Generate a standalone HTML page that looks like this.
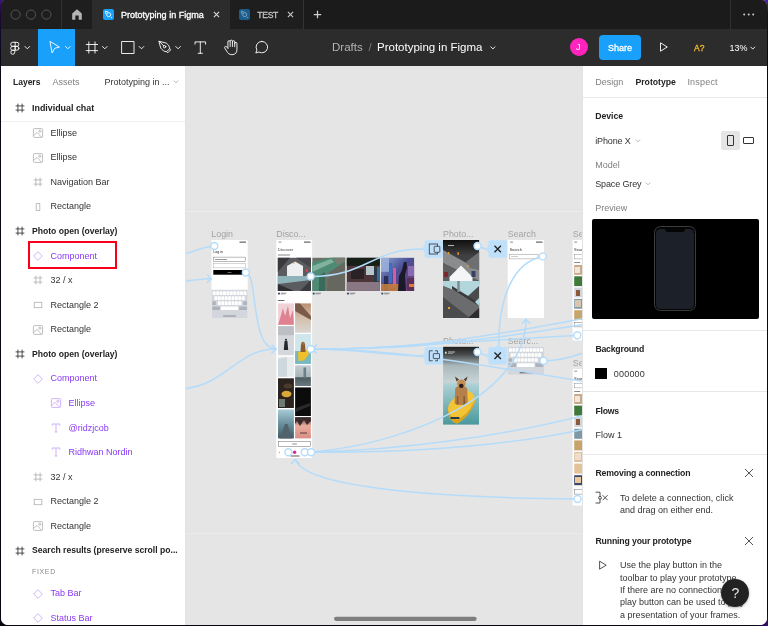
<!DOCTYPE html>
<html><head><meta charset="utf-8">
<style>
*{box-sizing:border-box;margin:0;padding:0}
html,body{width:768px;height:626px;overflow:hidden;background:radial-gradient(circle at 100% 100%,#3a0f78 0,rgba(58,15,120,0) 14px),radial-gradient(circle at 100% 0,#4a1ad0 0,rgba(74,26,208,0) 12px),linear-gradient(180deg,#3a1478 0px,#1a0a38 14px,#0b0616 60px,#08050f 100%);font-family:"Liberation Sans",sans-serif;font-size:9px;color:#222}
#win{position:absolute;left:1px;top:0;width:766px;height:625px;background:#e5e5e5;border-radius:5px 5px 7px 7px;overflow:hidden;will-change:transform}
.abs{position:absolute}
#tabbar{position:absolute;left:0;top:0;width:766px;height:29px;background:#1b1b1b}
#toolbar{position:absolute;left:0;top:29px;width:766px;height:37px;background:#2c2c2c}
#left{position:absolute;left:0;top:66px;width:185px;height:560px;background:#fff;border-right:1px solid #e2e2e2}
#right{position:absolute;left:581px;top:66px;width:185px;height:560px;background:#fff;border-left:1px solid #e2e2e2}
#canvas{position:absolute;left:185px;top:66px;width:396px;height:560px;background:#e5e5e5;overflow:hidden}
.t{position:absolute;white-space:nowrap;line-height:12px}
</style></head><body>
<div id="win">
<div id="tabbar">
<div class="abs" style="left:0;top:0;width:60px;height:29px;background:#1e1e1e"></div><div class="abs" style="left:60px;top:0;width:1px;height:29px;background:#303030"></div>
<div class="abs" style="left:61px;top:0;width:30px;height:29px;background:#1e1e1e"></div>
<svg class="abs" style="left:0;top:0" width="100" height="29" viewBox="0 0 100 29">
<g fill="none" stroke="#5a5a5a" stroke-width="0.9"><circle cx="14.6" cy="14.6" r="4.6"/><circle cx="30" cy="14.6" r="4.6"/><circle cx="45.4" cy="14.6" r="4.6"/></g>
<path d="M76 9.3 L71.2 13.6 V19.8 H74.3 V15.6 H77.7 V19.8 H80.8 V13.6 Z" fill="#b3b3b3"/>
</svg>
<div class="abs" style="left:91px;top:0;width:138px;height:29px;background:#2c2c2c"></div>
<div class="abs" style="left:102px;top:9px;width:11px;height:11px;border-radius:2px;background:#18a0fb"></div>
<svg class="abs" style="left:102px;top:9px" width="11" height="11" viewBox="0 0 11 11"><g fill="none" stroke="#fff" stroke-width="0.9"><circle cx="5.7" cy="5.7" r="2"/><path d="M2.3 2.3 L5.2 3 M2.3 2.3 L3 5.2 M8 8 L9 9"/></g></svg>
<div class="t" style="left:119.9px;top:8.5px;color:#fff;font-size:9.05px;-webkit-text-stroke:0.3px #fff">Prototyping in Figma</div>
<svg class="abs" style="left:210.9px;top:10px" width="9" height="9" viewBox="0 0 9 9"><path d="M1.9 1.9 L7.1 7.1 M7.1 1.9 L1.9 7.1" stroke="#d8d8d8" stroke-width="1.15" fill="none"/></svg>
<div class="abs" style="left:229px;top:0;width:74px;height:29px;background:#1e1e1e"></div>
<div class="abs" style="left:238.4px;top:9px;width:11px;height:11px;border-radius:2px;background:#1b5e8e"></div>
<svg class="abs" style="left:238.4px;top:9px" width="11" height="11" viewBox="0 0 11 11"><g fill="none" stroke="#8ab" stroke-width="0.9"><circle cx="5.7" cy="5.7" r="2"/><path d="M2.3 2.3 L5.2 3 M2.3 2.3 L3 5.2 M8 8 L9 9"/></g></svg>
<div class="t" style="left:256.3px;top:8.5px;color:#c4c4c4;font-size:8.6px;letter-spacing:-0.3px;-webkit-text-stroke:0.3px #c4c4c4">TEST</div>
<svg class="abs" style="left:285.3px;top:10px" width="9" height="9" viewBox="0 0 9 9"><path d="M1.9 1.9 L7.1 7.1 M7.1 1.9 L1.9 7.1" stroke="#c4c4c4" stroke-width="1.15" fill="none"/></svg>
<div class="abs" style="left:302px;top:0;width:1px;height:29px;background:#343434"></div>
<svg class="abs" style="left:310.5px;top:9px" width="11" height="11" viewBox="0 0 11 11"><path d="M5.5 1.8 V9.2 M1.8 5.5 H9.2" stroke="#cfcfcf" stroke-width="1.25" fill="none"/></svg>
<div class="abs" style="left:729px;top:0;width:1px;height:29px;background:#303030"></div>
<svg class="abs" style="left:740px;top:11px" width="16" height="6" viewBox="0 0 16 6"><g fill="#d0d0d0"><circle cx="3.2" cy="3.5" r="1"/><circle cx="7.7" cy="3.5" r="1"/><circle cx="12.2" cy="3.5" r="1"/></g></svg>
</div>
<div id="toolbar">
<div class="abs" style="left:37px;top:0;width:37px;height:37px;background:#18a0fb"></div>
<svg class="abs" style="left:0;top:0" width="300" height="37" viewBox="0 0 300 37">
<g fill="none" stroke="#fff" stroke-width="0.9" stroke-linecap="round" stroke-linejoin="round">
<!-- figma logo -->
<path d="M13.8 13.3 H11.7 a2 2 0 0 0 0 4 H13.8 Z M13.8 13.3 H15.9 a2 2 0 0 1 0 4 H13.8 M13.8 17.3 H11.7 a2 2 0 0 0 0 4 H13.8 Z M13.8 21.3 H11.7 a2 2 0 1 0 2.1 2 Z"/>
<circle cx="15.9" cy="19.3" r="2"/>
<!-- chevrons -->
<path d="M24 17.5 l2.3 2.3 l2.3 -2.3"/>
<path d="M64.5 17.5 l2.3 2.3 l2.3 -2.3"/>
<path d="M101.5 17.5 l2.3 2.3 l2.3 -2.3"/>
<path d="M138.2 17.5 l2.3 2.3 l2.3 -2.3"/>
<path d="M174.8 17.5 l2.3 2.3 l2.3 -2.3"/>
<!-- cursor -->
<path d="M49.3 12.6 L58.4 18 L53.7 19.3 L51.3 23.6 Z"/>
<!-- frame -->
<path d="M87.8 12.5 V24.5 M94 12.5 V24.5 M84.8 15.5 H97 M84.8 21.6 H97" stroke-linecap="butt"/>
<!-- rect -->
<rect x="121" y="12.5" width="12" height="12"/>
<!-- pen -->
<path d="M158.2 12.3 L165.3 14.1 C167.4 15.7 168.6 17.7 168.6 19.7 L165.6 22.7 C163.6 22.7 161.6 21.5 160 19.4 Z M158.2 12.3 L162.7 16.8 M168.6 19.7 L169.7 20.8 L166.7 23.8 L165.6 22.7"/>
<circle cx="163.6" cy="17.7" r="1.2"/>
<!-- T -->
<path d="M194 15.2 V12.9 H204.6 V15.2 M199.3 12.9 V24.3 M197.2 24.3 H201.4"/>
<!-- hand -->
<g transform="translate(230.3 18.9) scale(1.13) translate(-230.2 -19.2)" stroke-width="0.8"><path d="M227.2 19.5 V13.8 a1 1 0 0 1 2 0 V18 M229.2 13.3 a1 1 0 0 1 2 0 V18 M231.2 13.8 a1 1 0 0 1 2 0 V18.2 M233.2 15.3 a1 1 0 0 1 2 0 V20.5 c0 3 -1.5 4.7 -4.3 4.7 c-2.5 0 -3.5 -1 -4.8 -3.2 L224.3 19.2 a1.05 1.05 0 0 1 1.7 -1.1 L227.2 19.5"/></g>
<!-- comment -->
<path d="M261 12.4 a5.7 5.7 0 1 1 -3 10.6 L254.8 24 L255.9 21 A5.7 5.7 0 0 1 261 12.4 Z"/>
</g></svg>
<div class="t" style="left:331px;top:11px;font-size:11.5px;line-height:14px;color:#b3b3b3">Drafts</div>
<div class="t" style="left:367.5px;top:11px;font-size:11.5px;line-height:14px;color:#7a7a7a">/</div>
<div class="t" style="left:376px;top:11px;font-size:11.5px;line-height:14px;color:#fff">Prototyping in Figma</div>
<svg class="abs" style="left:487px;top:15px" width="10" height="8" viewBox="0 0 10 8"><path d="M2.5 2.5 l2.4 2.4 l2.4 -2.4" fill="none" stroke="#fff" stroke-width="0.9"/></svg>
<div class="abs" style="left:568.6px;top:9.3px;width:18px;height:18px;border-radius:9px;background:#ff24bd"></div>
<div class="t" style="left:575px;top:12.3px;font-size:9px;color:#fff">J</div>
<div class="abs" style="left:598px;top:6px;width:42px;height:25px;border-radius:4px;background:#18a0fb"></div>
<div class="t" style="left:607px;top:12.5px;font-size:9px;color:#fff;-webkit-text-stroke:0.3px #fff">Share</div>
<svg class="abs" style="left:656.2px;top:11.2px" width="14" height="14" viewBox="0 0 14 14"><path d="M3.5 2.8 L10.3 7 L3.5 11.2 Z" fill="none" stroke="#fff" stroke-width="0.9" stroke-linejoin="round"/></svg>
<div class="t" style="left:693px;top:12.5px;font-size:8.5px;color:#f0ba2f;-webkit-text-stroke:0.3px #f0ba2f">A?</div>
<div class="t" style="left:728.5px;top:12.5px;font-size:9px;color:#fff">13%</div>
<svg class="abs" style="left:747px;top:15px" width="10" height="8" viewBox="0 0 10 8"><path d="M2.5 2.8 l2.3 2.3 l2.3 -2.3" fill="none" stroke="#fff" stroke-width="0.9"/></svg>
</div>
<div id="canvas">
<svg class="abs" style="left:0;top:0" width="397" height="560" viewBox="186 66 397 560" font-family="Liberation Sans, sans-serif">
<defs>
<linearGradient id="gTop" x1="0" y1="0" x2="0" y2="1"><stop offset="0" stop-color="#101010"/><stop offset="0.2" stop-color="#404042"/><stop offset="1" stop-color="#525254"/></linearGradient>
<linearGradient id="gSea" x1="0" y1="0" x2="0" y2="1"><stop offset="0" stop-color="#1e1e1e"/><stop offset="0.1" stop-color="#484b4c"/><stop offset="0.24" stop-color="#a9b7ba"/><stop offset="0.45" stop-color="#c6d4d6"/><stop offset="0.5" stop-color="#a9cfd2"/><stop offset="1" stop-color="#4a999d"/></linearGradient>
<linearGradient id="gCity" x1="0" y1="0" x2="1" y2="1"><stop offset="0" stop-color="#8ea6d6"/><stop offset="0.45" stop-color="#4a4f96"/><stop offset="1" stop-color="#7a3a6a"/></linearGradient>
<linearGradient id="gRoad" x1="0" y1="0" x2="0" y2="1"><stop offset="0" stop-color="#a9cbd8"/><stop offset="0.45" stop-color="#6f95a3"/><stop offset="1" stop-color="#3f5b66"/></linearGradient>
<linearGradient id="gSun" x1="0" y1="0" x2="0" y2="1"><stop offset="0" stop-color="#5a3f3f"/><stop offset="0.4" stop-color="#e9ab9c"/><stop offset="1" stop-color="#d98f86"/></linearGradient>
<linearGradient id="gTower" x1="0" y1="0" x2="0" y2="1"><stop offset="0" stop-color="#c3cdd2"/><stop offset="0.55" stop-color="#aab6bb"/><stop offset="0.6" stop-color="#4c5c61"/><stop offset="1" stop-color="#6a7a7f"/></linearGradient>
<linearGradient id="gBeige" x1="0" y1="0" x2="0" y2="1"><stop offset="0" stop-color="#b98f70"/><stop offset="0.5" stop-color="#d4bfae"/><stop offset="1" stop-color="#d9d6d2"/></linearGradient>
<clipPath id="cv"><rect x="186" y="66" width="397" height="560"/></clipPath>
</defs>
<rect x="186" y="211" width="397" height="1" fill="#ececec"/>
<rect x="186" y="533" width="397" height="1" fill="#ececec"/>
<text x="211.3" y="236.8" font-size="8.85" fill="#a3a3a3">Login</text>
<text x="276.3" y="236.8" font-size="8.85" fill="#a3a3a3">Disco...</text>
<text x="443" y="236.8" font-size="8.85" fill="#a3a3a3">Photo...</text>
<text x="507.8" y="236.8" font-size="8.85" fill="#a3a3a3">Search</text>
<text x="572.8" y="236.8" font-size="8.85" fill="#a3a3a3">Se</text>
<text x="443" y="344" font-size="8.85" fill="#a3a3a3">Photo...</text>
<text x="507.8" y="344" font-size="8.85" fill="#a3a3a3">Searc...</text>
<text x="572.8" y="366.2" font-size="8.85" fill="#a3a3a3">Se</text>
<rect x="211.5" y="240" width="36.2" height="78" fill="#fff"/>
<rect x="211.5" y="289.8" width="36.2" height="28.2" fill="#d3d6dc"/>
<text x="213.3" y="253.3" font-size="3.6" fill="#222">Log in</text>
<rect x="213.4" y="257.1" width="32.3" height="4.4" fill="#fff" stroke="#555" stroke-width="0.4"/>
<rect x="215" y="259" width="12" height="0.6" fill="#555"/>
<rect x="213.4" y="263.5" width="32.3" height="4.4" fill="#fff" stroke="#999" stroke-width="0.4"/>
<rect x="213.3" y="270" width="32.5" height="4.7" fill="#000"/>
<rect x="227.5" y="272.1" width="4" height="0.5" fill="#ccc"/>
<rect x="239.5" y="241.6" width="6.5" height="1" fill="#444"/>
<rect x="212.75" y="291.30" width="2.92" height="3.6" rx="0.5" fill="#fff"/><rect x="216.17" y="291.30" width="2.92" height="3.6" rx="0.5" fill="#fff"/><rect x="219.59" y="291.30" width="2.92" height="3.6" rx="0.5" fill="#fff"/><rect x="223.01" y="291.30" width="2.92" height="3.6" rx="0.5" fill="#fff"/><rect x="226.43" y="291.30" width="2.92" height="3.6" rx="0.5" fill="#fff"/><rect x="229.85" y="291.30" width="2.92" height="3.6" rx="0.5" fill="#fff"/><rect x="233.27" y="291.30" width="2.92" height="3.6" rx="0.5" fill="#fff"/><rect x="236.69" y="291.30" width="2.92" height="3.6" rx="0.5" fill="#fff"/><rect x="240.11" y="291.30" width="2.92" height="3.6" rx="0.5" fill="#fff"/><rect x="243.53" y="291.30" width="2.92" height="3.6" rx="0.5" fill="#fff"/><rect x="214.46" y="296.30" width="2.92" height="3.6" rx="0.5" fill="#fff"/><rect x="217.88" y="296.30" width="2.92" height="3.6" rx="0.5" fill="#fff"/><rect x="221.30" y="296.30" width="2.92" height="3.6" rx="0.5" fill="#fff"/><rect x="224.72" y="296.30" width="2.92" height="3.6" rx="0.5" fill="#fff"/><rect x="228.14" y="296.30" width="2.92" height="3.6" rx="0.5" fill="#fff"/><rect x="231.56" y="296.30" width="2.92" height="3.6" rx="0.5" fill="#fff"/><rect x="234.98" y="296.30" width="2.92" height="3.6" rx="0.5" fill="#fff"/><rect x="238.40" y="296.30" width="2.92" height="3.6" rx="0.5" fill="#fff"/><rect x="241.82" y="296.30" width="2.92" height="3.6" rx="0.5" fill="#fff"/><rect x="217.88" y="301.30" width="2.92" height="3.6" rx="0.5" fill="#fff"/><rect x="221.30" y="301.30" width="2.92" height="3.6" rx="0.5" fill="#fff"/><rect x="224.72" y="301.30" width="2.92" height="3.6" rx="0.5" fill="#fff"/><rect x="228.14" y="301.30" width="2.92" height="3.6" rx="0.5" fill="#fff"/><rect x="231.56" y="301.30" width="2.92" height="3.6" rx="0.5" fill="#fff"/><rect x="234.98" y="301.30" width="2.92" height="3.6" rx="0.5" fill="#fff"/><rect x="238.40" y="301.30" width="2.92" height="3.6" rx="0.5" fill="#fff"/>
<rect x="212.3" y="301.3" width="3.6" height="3.6" rx="0.5" fill="#adb3bd"/><rect x="243.3" y="301.3" width="3.6" height="3.6" rx="0.5" fill="#adb3bd"/>
<rect x="212.3" y="306.4" width="7.6" height="3.6" rx="0.5" fill="#adb3bd"/><rect x="220.8" y="306.4" width="17.4" height="3.6" rx="0.5" fill="#fff"/><rect x="239.2" y="306.4" width="7.7" height="3.6" rx="0.5" fill="#adb3bd"/>
<rect x="223" y="315.4" width="13" height="1.1" rx="0.5" fill="#8a8d93"/>
<rect x="276.3" y="240" width="35.8" height="218" fill="#fff"/>
<rect x="304" y="241.6" width="6.5" height="1" fill="#444"/><rect x="278.5" y="241.7" width="3" height="0.8" fill="#777"/>
<text x="277.8" y="250.5" font-size="4" fill="#444">Discover</text>
<rect x="277.9" y="254.6" width="12" height="0.8" fill="#666"/>
<g><rect x="277.8" y="257.8" width="33.2" height="33.1" fill="#5b5c60"/><path d="M277.8 257.8 L290 257.8 L277.8 272 Z" fill="#3a3a3e"/><path d="M287 266 L295 261.5 L303 266 L303 276 L287 276 Z" fill="#eceef0"/><path d="M277.8 276 L311 276 L311 280 L277.8 284 Z" fill="#8fb3b8"/><path d="M277.8 284 L294 290.9 L277.8 290.9 Z" fill="#2f2f33"/><path d="M300 290.9 L311 280 L311 290.9 Z" fill="#3b3b3f"/><path d="M296 257.8 L311 257.8 L311 268 Z" fill="#47474b"/><rect x="293" y="262" width="1.5" height="1.5" fill="#e8a030"/><rect x="306" y="269" width="2" height="3" fill="#c44"/></g>
<g><rect x="312.4" y="257.8" width="32.7" height="33.1" fill="#6d6e66"/><path d="M312.4 262 L330 257.8 L345.1 257.8 L345.1 262 L325 275 L325 290.9 L312.4 290.9 Z" fill="#4f8a75"/><path d="M312.4 266 L331 259 L334 262 L312.4 272 Z" fill="#7fb39f"/><path d="M319 276 L325 272 L325 290.9 L319 290.9 Z" fill="#3a6b5a"/><path d="M330 272 L345.1 262 L345.1 290.9 L327 290.9 Z" fill="#66675f"/><path d="M333 257.8 L345.1 257.8 L345.1 261 L337 265 Z" fill="#7b7c70"/></g>
<g><rect x="346.8" y="257.8" width="33" height="33.1" fill="#4a3638"/><rect x="346.8" y="257.8" width="33" height="8" fill="#162019"/><rect x="346.8" y="282" width="33" height="8.9" fill="#8a7784"/><rect x="351" y="269" width="13" height="10" fill="#2a2226"/><rect x="366" y="266" width="8" height="9" fill="#b8c6cc"/><rect x="374" y="268" width="3" height="14" fill="#2b3a4a"/><rect x="377" y="267" width="2.5" height="14" fill="#3d6d8a"/></g>
<g><rect x="381" y="257.8" width="33.1" height="33.1" fill="url(#gCity)"/><rect x="381" y="257.8" width="8" height="14" fill="#9db4dc" opacity="0.8"/><rect x="389" y="263" width="3" height="20" fill="#3b6fc0"/><rect x="393" y="268" width="3" height="18" fill="#d85aa0"/><rect x="384" y="276" width="4" height="14.9" fill="#2a2f5a"/><rect x="381" y="284" width="20" height="6.9" fill="#c9803a" opacity="0.85"/><path d="M398 290.9 L399 276 L402 270 L404 262 L406.5 262 L407 268 L405 275 L406 290.9 Z" fill="#1c1a2a"/><rect x="408" y="266" width="6.1" height="10" fill="#8a6ab0"/><rect x="407" y="278" width="7.1" height="12.9" fill="#5a2f5a"/><rect x="409" y="284" width="5" height="3" fill="#e07a3a"/></g>
<circle cx="279.0" cy="293.6" r="1.1" fill="#3b4a6a"/><rect x="280.8" y="292.8" width="5.5" height="0.7" fill="#555"/><rect x="280.8" y="293.9" width="4" height="0.5" fill="#999"/>
<circle cx="313.7" cy="293.6" r="1.1" fill="#3b4a6a"/><rect x="315.5" y="292.8" width="5.5" height="0.7" fill="#555"/><rect x="315.5" y="293.9" width="4" height="0.5" fill="#999"/>
<circle cx="348.0" cy="293.6" r="1.1" fill="#3b4a6a"/><rect x="349.8" y="292.8" width="5.5" height="0.7" fill="#555"/><rect x="349.8" y="293.9" width="4" height="0.5" fill="#999"/>
<circle cx="382.3" cy="293.6" r="1.1" fill="#3b4a6a"/><rect x="384.1" y="292.8" width="5.5" height="0.7" fill="#555"/><rect x="384.1" y="293.9" width="4" height="0.5" fill="#999"/>
<rect x="277.9" y="300.2" width="6.5" height="0.8" fill="#444"/>
<g><rect x="278" y="303.4" width="15.9" height="21.4" fill="#efd3d6"/><path d="M279 322 L283 308 L285 316 L288 306 L290 318 L293 310 L293.9 324.8 L278 324.8 Z" fill="#d9657a" opacity="0.75"/><rect x="278" y="326.2" width="15.9" height="29" fill="#d4d7db"/><rect x="278" y="326.2" width="15.9" height="9" fill="#bcc0c5"/><path d="M284.6 341 L287.4 341 L288.2 350 L283.8 350 Z" fill="#23262b"/><circle cx="286" cy="339.8" r="1.1" fill="#333"/><rect x="278" y="356.7" width="15.9" height="20.1" fill="#e6ebee"/><path d="M278 359 L287 357 L287 376.8 L278 376.8 Z" fill="#cfd9dd"/><rect x="278" y="378.3" width="15.9" height="29.7" fill="#2b231d"/><ellipse cx="286.5" cy="394" rx="5" ry="3.2" fill="#d9a93a"/><rect x="279" y="399" width="6" height="8" fill="#6f7a73"/><ellipse cx="288" cy="386" rx="4.5" ry="2.5" fill="#4a3a2c"/><rect x="278" y="409.4" width="15.9" height="29" fill="url(#gRoad)"/><path d="M285 424 L287.5 424 L292 438.4 L280 438.4 Z" fill="#53636b"/></g>
<g><rect x="295.1" y="303.4" width="15.8" height="29.3" fill="url(#gBeige)"/><path d="M295.1 303.4 L300 303.4 L310.9 316 L310.9 320 L295.1 311 Z" fill="#7a5a48"/><rect x="295.1" y="334" width="15.8" height="29.9" fill="#cfe6ea"/><rect x="295.1" y="351" width="15.8" height="12.9" fill="#76b9c0"/><path d="M298 352 L307 349 L309 354 L304 360.5 L298.5 361 Z" fill="#f0c02a"/><path d="M301 344 L305 344 L305.5 352 L300.5 352 Z" fill="#8a5a32"/><circle cx="303" cy="343.6" r="1.8" fill="#a06a3a"/><rect x="295.1" y="365.3" width="15.8" height="20.7" fill="url(#gTower)"/><rect x="303.5" y="367.5" width="2.6" height="10" fill="#6b7f88"/><rect x="295.1" y="387.4" width="15.8" height="28.6" fill="#0c0c0d"/><path d="M296 408 L310 403 L310 406 L296 412 Z" fill="#2a2a2c"/><rect x="295.1" y="417.3" width="15.8" height="21.1" fill="url(#gSun)"/><path d="M295.1 417.3 H310.9 V421 L307 425 L304 420 L300 426 L297 421 L295.1 424 Z" fill="#3a2a2c"/><rect x="300" y="432.5" width="7" height="1" fill="#5a3a3c"/></g>
<rect x="278.3" y="441.7" width="32.3" height="4.5" fill="#fff" stroke="#444" stroke-width="0.4"/><rect x="292.3" y="443.7" width="4.5" height="0.6" fill="#444"/>
<circle cx="294.6" cy="452.3" r="1.7" fill="#e0248f"/><rect x="290.5" y="455.6" width="9" height="0.8" fill="#333"/><circle cx="279.5" cy="452.3" r="0.6" fill="#999"/>
<g><rect x="443" y="240" width="36.1" height="78" fill="url(#gTop)"/><path d="M443 250 L479.1 270 L479.1 281 L443 263 Z" fill="#8a8b8d"/><path d="M443 263 L479.1 281 L479.1 284 L443 284 Z" fill="#5e5f61"/><path d="M466 262 L479.1 252 L479.1 270 L470 268 Z" fill="#6e6f71"/><path d="M449.5 277 L461 265.5 L472.5 277 L472.5 283 L449.5 283 Z" fill="#f3f5f6"/><path d="M443 281 L479.1 281 L479.1 286 L468 296 L443 286 Z" fill="#b2d6db"/><path d="M443 286 L468 296 L479.1 306 L479.1 318 L443 318 Z" fill="#6b6c6e"/><path d="M452 286 L479.1 303 L479.1 306 L452 289 Z" fill="#3a3a3c"/><path d="M443 297 L470 318 L443 318 Z" fill="#4a4b4d"/><path d="M468 318 L479.1 308 L479.1 318 Z" fill="#2c2c2e"/><path d="M475 302 L479.1 298 L479.1 306 Z" fill="#b2d6db"/><rect x="457.3" y="281" width="2.4" height="11" fill="#7d8a8a"/><rect x="444" y="272" width="4" height="5" fill="#7a2a2c"/><rect x="471.5" y="271" width="4" height="6" fill="#3a3f6a"/><rect x="448" y="252" width="1.3" height="2.4" fill="#e8a030"/><rect x="457.5" y="252" width="1.3" height="3" fill="#e8a030"/><rect x="467.5" y="265" width="1.2" height="2.2" fill="#e8a030"/><rect x="448" y="307" width="2" height="2" fill="#e8a030"/><rect x="448" y="245" width="6" height="0.8" fill="#ddd"/></g>
<rect x="507.7" y="240" width="36.3" height="78" fill="#fff"/>
<rect x="536" y="241.6" width="6.5" height="1" fill="#444"/><rect x="510" y="241.7" width="3" height="0.8" fill="#777"/>
<text x="509.4" y="250.7" font-size="4" fill="#333">Search</text>
<rect x="509.6" y="254.4" width="28.4" height="4.5" fill="#fff" stroke="#777" stroke-width="0.4"/><rect x="511" y="256.4" width="7" height="0.6" fill="#aaa"/>
<rect x="572.6" y="240" width="12" height="100.5" fill="#fff"/>
<rect x="574.2" y="241.7" width="3" height="0.8" fill="#777"/><text x="574" y="250.7" font-size="4" fill="#333">Sear</text><rect x="574.2" y="254.4" width="10" height="4.5" fill="#fff" stroke="#777" stroke-width="0.4"/><rect x="574.2" y="262" width="6" height="0.7" fill="#555"/>
<rect x="574.2" y="265.0" width="9" height="9.8" fill="#c9a98a"/>
<rect x="574.2" y="276.3" width="9" height="9.8" fill="#3f7a3a"/>
<rect x="574.2" y="287.6" width="9" height="9.8" fill="#cfd6de"/>
<rect x="574.2" y="298.9" width="9" height="9.8" fill="#7d99a6"/>
<rect x="574.2" y="310.2" width="9" height="9.8" fill="#c7a56a"/>
<rect x="575" y="267" width="5" height="6" fill="#f1e6da"/><rect x="576" y="290" width="4" height="6" fill="#8a5a3a"/><rect x="575" y="300" width="6" height="7" fill="#d9c6b0"/>
<rect x="574.2" y="322.5" width="10" height="4.4" fill="#fff" stroke="#555" stroke-width="0.4"/>
<g><rect x="443.1" y="346.8" width="35.9" height="77.8" fill="url(#gSea)"/><path d="M448 408 C449 400 458 394 468 391 C473 392 476 397 474.5 403 C471 412 463 421 457 423.5 C451 422 447.5 416 448 408 Z" fill="#f2c436"/><path d="M448 409.5 C450 417 455 419.5 458 419.5 C465 416 472 408 474.6 400.5 L474.5 403 C471 412 463 421 457 423.5 C451 422 447.5 416 448 408 Z" fill="#d7a21f"/><path d="M455.2 389 C455.5 385 467 385 467.2 389 L467.8 403.5 C464 405.5 458 405.5 454.6 403.5 Z" fill="#b5804a"/><path d="M457 396 L458.2 396 L458.4 404.5 L456.6 404.5 Z M463.5 396 L464.8 396 L465.4 404.5 L463.4 404.5 Z" fill="#8a5a30"/><path d="M456.5 381.5 L455 376.6 L459 379.6 Z M466 381.5 L467.6 376.6 L463.6 379.6 Z" fill="#5a3a28"/><ellipse cx="461.3" cy="383.6" rx="4.3" ry="4" fill="#c08c52"/><ellipse cx="461.3" cy="385.9" rx="2.3" ry="2.1" fill="#2a1e18"/><rect x="450.5" y="417" width="9" height="2" rx="0.6" fill="#2e3a3c"/><rect x="445" y="351.7" width="1.6" height="2" fill="#e8e0c0"/><rect x="448" y="351.6" width="7" height="0.8" fill="#ddd"/><rect x="448" y="353" width="5" height="0.6" fill="#bbb"/></g>
<rect x="507.7" y="346.8" width="36.3" height="27.8" fill="#d3d6dc"/>
<rect x="508.95" y="348.20" width="2.93" height="3.6" rx="0.5" fill="#fff"/><rect x="512.38" y="348.20" width="2.93" height="3.6" rx="0.5" fill="#fff"/><rect x="515.81" y="348.20" width="2.93" height="3.6" rx="0.5" fill="#fff"/><rect x="519.24" y="348.20" width="2.93" height="3.6" rx="0.5" fill="#fff"/><rect x="522.67" y="348.20" width="2.93" height="3.6" rx="0.5" fill="#fff"/><rect x="526.10" y="348.20" width="2.93" height="3.6" rx="0.5" fill="#fff"/><rect x="529.53" y="348.20" width="2.93" height="3.6" rx="0.5" fill="#fff"/><rect x="532.96" y="348.20" width="2.93" height="3.6" rx="0.5" fill="#fff"/><rect x="536.39" y="348.20" width="2.93" height="3.6" rx="0.5" fill="#fff"/><rect x="539.82" y="348.20" width="2.93" height="3.6" rx="0.5" fill="#fff"/><rect x="510.66" y="353.20" width="2.93" height="3.6" rx="0.5" fill="#fff"/><rect x="514.09" y="353.20" width="2.93" height="3.6" rx="0.5" fill="#fff"/><rect x="517.52" y="353.20" width="2.93" height="3.6" rx="0.5" fill="#fff"/><rect x="520.95" y="353.20" width="2.93" height="3.6" rx="0.5" fill="#fff"/><rect x="524.38" y="353.20" width="2.93" height="3.6" rx="0.5" fill="#fff"/><rect x="527.81" y="353.20" width="2.93" height="3.6" rx="0.5" fill="#fff"/><rect x="531.25" y="353.20" width="2.93" height="3.6" rx="0.5" fill="#fff"/><rect x="534.67" y="353.20" width="2.93" height="3.6" rx="0.5" fill="#fff"/><rect x="538.11" y="353.20" width="2.93" height="3.6" rx="0.5" fill="#fff"/><rect x="514.10" y="358.20" width="2.93" height="3.6" rx="0.5" fill="#fff"/><rect x="517.52" y="358.20" width="2.93" height="3.6" rx="0.5" fill="#fff"/><rect x="520.96" y="358.20" width="2.93" height="3.6" rx="0.5" fill="#fff"/><rect x="524.38" y="358.20" width="2.93" height="3.6" rx="0.5" fill="#fff"/><rect x="527.82" y="358.20" width="2.93" height="3.6" rx="0.5" fill="#fff"/><rect x="531.25" y="358.20" width="2.93" height="3.6" rx="0.5" fill="#fff"/><rect x="534.68" y="358.20" width="2.93" height="3.6" rx="0.5" fill="#fff"/>
<rect x="508.5" y="358.2" width="3.6" height="3.6" rx="0.5" fill="#adb3bd"/><rect x="539.6" y="358.2" width="3.6" height="3.6" rx="0.5" fill="#adb3bd"/>
<rect x="508.5" y="363.3" width="7.6" height="3.6" rx="0.5" fill="#adb3bd"/><rect x="517" y="363.3" width="17.4" height="3.6" rx="0.5" fill="#fff"/><rect x="535.4" y="363.3" width="7.8" height="3.6" rx="0.5" fill="#adb3bd"/>
<rect x="519.5" y="372.2" width="13" height="1.1" rx="0.5" fill="#555"/>
<rect x="572.6" y="369" width="12" height="136.5" fill="#fff"/>
<rect x="574.2" y="370.7" width="3" height="0.8" fill="#777"/><text x="574" y="379.7" font-size="4" fill="#333">Sear</text><rect x="574.2" y="383.4" width="10" height="4.5" fill="#fff" stroke="#777" stroke-width="0.4"/><rect x="574.2" y="391" width="6" height="0.7" fill="#555"/>
<rect x="574.2" y="394.0" width="9" height="10" fill="#c9a98a"/>
<rect x="574.2" y="405.6" width="9" height="10" fill="#3f7a3a"/>
<rect x="574.2" y="417.2" width="9" height="10" fill="#cfd6de"/>
<rect x="574.2" y="428.8" width="9" height="10" fill="#7d99a6"/>
<rect x="574.2" y="440.4" width="9" height="10" fill="#c7a56a"/>
<rect x="574.2" y="452.0" width="9" height="10" fill="#d9c1a0"/>
<rect x="574.2" y="463.6" width="9" height="10" fill="#e3c29a"/>
<rect x="574.2" y="475.2" width="9" height="10" fill="#3a4a6a"/>
<rect x="575" y="396" width="5" height="6" fill="#f1e6da"/><rect x="576" y="419" width="4" height="6" fill="#8a5a3a"/><rect x="575" y="453" width="6" height="7" fill="#f0dcc8"/><rect x="575" y="477" width="6" height="6" fill="#e8c9a0"/>
<rect x="574.2" y="489.5" width="10" height="4.6" fill="#fff" stroke="#555" stroke-width="0.4"/>
<g fill="none" stroke="#b4dcfa" stroke-width="1.5" stroke-linecap="round" stroke-linejoin="round">
<path d="M186 253.5 C196 251 204 246.5 214.3 246"/>
<path d="M186 281 C196 280 202 278.7 211 278.7"/>
<path d="M245.8 272.5 C258 272.5 250 349 276 349"/>
<path d="M186 388.5 C226 384 238 349 276 349"/>
<path d="M310.7 276.5 C366 276.5 372 249 422 249"/>
<path d="M477.5 246 L486 249"/>
<path d="M477.5 352 L486 355.6"/>
<path d="M542.7 256.4 C512 262 498.75 300 498.75 345"/>
<path d="M311.1 452.3 C420 442 526 390 526 319.5"/>
<path d="M543.5 360.7 C560 361 572 357 583 353"/>
<path d="M312 349 C390 349 440 346 583 318.5"/>
<path d="M312 349 C390 349 440 347 583 324.5"/>
<path d="M312 349 C390 349 430 343 577.3 335.4"/>
<path d="M312 349 C360 349 390 355.8 422 355.8"/>
<path d="M312 349 C385 349 455 360 583 381.5"/>
<path d="M311.1 452.3 C400 450 500 437 583 415.5"/>
<path d="M311.1 452.3 C400 453 500 447 583 429.5"/>
<path d="M577.5 499 C440 498 305 488 295.3 459.5"/>
<path d="M207.5 275 L211.3 278.7 L207.5 282.4"/>
<path d="M272 345 L276 349 L272 353"/>
<path d="M316.5 345 L312.3 349 L316.5 353"/>
<path d="M522.3 323.3 L526 319.3 L529.7 323.3"/>
<path d="M291.5 463.5 L295.3 459.5 L299.1 463.5"/>
</g>
<path d="M426.20000000000005 240.2 H441.4 Q443.0 240.2 443.0 241.79999999999998 V256.09999999999997 Q443.0 257.7 441.4 257.7 H426.20000000000005 Q424.6 257.7 424.6 256.09999999999997 V252.39999999999998 L421.70000000000005 249.0 L424.6 245.6 V241.79999999999998 Q424.6 240.2 426.20000000000005 240.2 Z" fill="#bfe0fb"/><rect x="429.3" y="244.0" width="8.2" height="10" fill="none" stroke="#444" stroke-width="0.9"/><rect x="434.20000000000005" y="246.3" width="5.6" height="6" rx="0.6" fill="#bfe0fb" stroke="#444" stroke-width="0.9"/>
<path d="M490.0 240.2 H505.19999999999993 Q506.79999999999995 240.2 506.79999999999995 241.79999999999998 V256.09999999999997 Q506.79999999999995 257.7 505.19999999999993 257.7 H490.0 Q488.4 257.7 488.4 256.09999999999997 V252.39999999999998 L485.5 249.0 L488.4 245.6 V241.79999999999998 Q488.4 240.2 490.0 240.2 Z" fill="#bfe0fb"/><path d="M494.5 245.8 L500.9 252.2 M500.9 245.8 L494.5 252.2" stroke="#222" stroke-width="1.35" fill="none"/>
<path d="M426.20000000000005 347 H441.4 Q443.0 347 443.0 348.6 V362.9 Q443.0 364.5 441.4 364.5 H426.20000000000005 Q424.6 364.5 424.6 362.9 V359.2 L421.70000000000005 355.8 L424.6 352.4 V348.6 Q424.6 347 426.20000000000005 347 Z" fill="#bfe0fb"/><path d="M432.70000000000005 350.8 H429.3 V360.8 H432.70000000000005 M435.1 350.8 H437.50000000000006 V352.8 M437.50000000000006 359.40000000000003 V360.8 H435.1" fill="none" stroke="#444" stroke-width="0.9"/><rect x="433.3" y="353.6" width="6.2" height="5" rx="0.5" fill="none" stroke="#444" stroke-width="0.9"/>
<path d="M490.0 347 H505.19999999999993 Q506.79999999999995 347 506.79999999999995 348.6 V362.9 Q506.79999999999995 364.5 505.19999999999993 364.5 H490.0 Q488.4 364.5 488.4 362.9 V359.2 L485.5 355.8 L488.4 352.4 V348.6 Q488.4 347 490.0 347 Z" fill="#bfe0fb"/><path d="M494.5 352.6 L500.9 359.0 M500.9 352.6 L494.5 359.0" stroke="#222" stroke-width="1.35" fill="none"/>
<path d="M495.6 347.2 L498.75 344.2 L501.9 347.2 Z" fill="#bfe0fb"/>
<circle cx="214.3" cy="246" r="3.5" fill="#fff" stroke="#b4dcfa" stroke-width="1.4"/>
<circle cx="245.8" cy="272.5" r="3.5" fill="#fff" stroke="#b4dcfa" stroke-width="1.4"/>
<circle cx="310.7" cy="276.5" r="3.5" fill="#fff" stroke="#b4dcfa" stroke-width="1.4"/>
<circle cx="310.7" cy="349" r="3.5" fill="#fff" stroke="#b4dcfa" stroke-width="1.4"/>
<circle cx="288.4" cy="452.3" r="3.5" fill="#fff" stroke="#b4dcfa" stroke-width="1.4"/>
<circle cx="304.7" cy="452.3" r="3.5" fill="#fff" stroke="#b4dcfa" stroke-width="1.4"/>
<circle cx="311.1" cy="452.3" r="3.5" fill="#fff" stroke="#b4dcfa" stroke-width="1.4"/>
<circle cx="477.5" cy="246" r="3.5" fill="#fff" stroke="#b4dcfa" stroke-width="1.4"/>
<circle cx="542.7" cy="256.4" r="3.5" fill="#fff" stroke="#b4dcfa" stroke-width="1.4"/>
<circle cx="477.5" cy="352" r="3.5" fill="#fff" stroke="#b4dcfa" stroke-width="1.4"/>
<circle cx="543.5" cy="360.7" r="3.5" fill="#fff" stroke="#b4dcfa" stroke-width="1.4"/>
<circle cx="577.3" cy="335.3" r="3.5" fill="#fff" stroke="#b4dcfa" stroke-width="1.4"/>
<circle cx="577.5" cy="499" r="3.5" fill="#fff" stroke="#b4dcfa" stroke-width="1.4"/>
<rect x="334" y="616.7" width="142.7" height="4.2" rx="2.1" fill="#7f7f7f"/>
</svg>
</div>
<div id="left">
<div class="t" style="left:12.0px;top:9.5px;font-size:8.5px;color:#222;font-weight:bold;">Layers</div>
<div class="t" style="left:51.5px;top:9.5px;font-size:9px;color:#808080;">Assets</div>
<div class="t" style="left:103.5px;top:9.5px;font-size:9px;color:#333;">Prototyping in ...</div>
<svg class="abs" style="left:170px;top:12px" width="10" height="8" viewBox="0 0 10 8"><path d="M2.8 2.6 l2.2 2.2 l2.2 -2.2" fill="none" stroke="#aaa" stroke-width="0.85"/></svg>
<div class="abs" style="left:0;top:54.5px;width:184px;height:1px;background:#efefef"></div>
<svg class="abs" style="left:12.5px;top:36.3px" width="12" height="12" viewBox="0 0 12 12"><g fill="none" stroke="#333" stroke-width="0.85"><path d="M3.9 1.6 V10.4 M8.1 1.6 V10.4 M1.6 3.9 H10.4 M1.6 8.1 H10.4"/></g></svg>
<div class="t" style="left:31.0px;top:36.0px;font-size:8.9px;color:#222;font-weight:bold;">Individual chat</div>
<svg class="abs" style="left:31.0px;top:60.9px" width="12" height="12" viewBox="0 0 12 12"><g fill="none" stroke="#b3b3b3" stroke-width="0.85"><rect x="1.4" y="1.6" width="9.2" height="8.8" rx="0.8"/><circle cx="7.9" cy="4.2" r="1.1"/><path d="M1.6 8.6 L5 5.4 L9.6 10.2"/></g></svg>
<div class="t" style="left:49.5px;top:60.6px;font-size:9px;color:#333;">Ellipse</div>
<svg class="abs" style="left:31.0px;top:85.5px" width="12" height="12" viewBox="0 0 12 12"><g fill="none" stroke="#b3b3b3" stroke-width="0.85"><rect x="1.4" y="1.6" width="9.2" height="8.8" rx="0.8"/><circle cx="7.9" cy="4.2" r="1.1"/><path d="M1.6 8.6 L5 5.4 L9.6 10.2"/></g></svg>
<div class="t" style="left:49.5px;top:85.2px;font-size:9px;color:#333;">Ellipse</div>
<svg class="abs" style="left:31.0px;top:110.0px" width="12" height="12" viewBox="0 0 12 12"><g fill="none" stroke="#b3b3b3" stroke-width="0.85"><path d="M3.9 1.6 V10.4 M8.1 1.6 V10.4 M1.6 3.9 H10.4 M1.6 8.1 H10.4"/></g></svg>
<div class="t" style="left:49.5px;top:109.7px;font-size:9px;color:#333;">Navigation Bar</div>
<svg class="abs" style="left:31.0px;top:134.6px" width="12" height="12" viewBox="0 0 12 12"><g fill="none" stroke="#b3b3b3" stroke-width="0.85"><rect x="4.2" y="2.6" width="3.6" height="6.9"/></g></svg>
<div class="t" style="left:49.5px;top:134.3px;font-size:9px;color:#333;">Rectangle</div>
<svg class="abs" style="left:12.5px;top:159.2px" width="12" height="12" viewBox="0 0 12 12"><g fill="none" stroke="#333" stroke-width="0.85"><path d="M3.9 1.6 V10.4 M8.1 1.6 V10.4 M1.6 3.9 H10.4 M1.6 8.1 H10.4"/></g></svg>
<div class="t" style="left:31.0px;top:158.9px;font-size:8.6px;color:#222;font-weight:bold;">Photo open (overlay)</div>
<svg class="abs" style="left:31.0px;top:183.8px" width="12" height="12" viewBox="0 0 12 12"><g fill="none" stroke="#c8a6fb" stroke-width="0.85"><path d="M6 1.7 L10.3 6 L6 10.3 L1.7 6 Z"/></g></svg>
<div class="t" style="left:49.5px;top:183.5px;font-size:9px;color:#8a38f5;">Component</div>
<svg class="abs" style="left:31.0px;top:208.4px" width="12" height="12" viewBox="0 0 12 12"><g fill="none" stroke="#b3b3b3" stroke-width="0.85"><path d="M3.9 1.6 V10.4 M8.1 1.6 V10.4 M1.6 3.9 H10.4 M1.6 8.1 H10.4"/></g></svg>
<div class="t" style="left:49.5px;top:208.1px;font-size:9px;color:#333;">32 / x</div>
<svg class="abs" style="left:31.0px;top:232.9px" width="12" height="12" viewBox="0 0 12 12"><g fill="none" stroke="#b3b3b3" stroke-width="0.85"><rect x="2.2" y="3.3" width="7.6" height="5.4"/></g></svg>
<div class="t" style="left:49.5px;top:232.6px;font-size:9px;color:#333;">Rectangle 2</div>
<svg class="abs" style="left:31.0px;top:257.5px" width="12" height="12" viewBox="0 0 12 12"><g fill="none" stroke="#b3b3b3" stroke-width="0.85"><rect x="1.4" y="1.6" width="9.2" height="8.8" rx="0.8"/><circle cx="7.9" cy="4.2" r="1.1"/><path d="M1.6 8.6 L5 5.4 L9.6 10.2"/></g></svg>
<div class="t" style="left:49.5px;top:257.2px;font-size:9px;color:#333;">Rectangle</div>
<svg class="abs" style="left:12.5px;top:282.1px" width="12" height="12" viewBox="0 0 12 12"><g fill="none" stroke="#333" stroke-width="0.85"><path d="M3.9 1.6 V10.4 M8.1 1.6 V10.4 M1.6 3.9 H10.4 M1.6 8.1 H10.4"/></g></svg>
<div class="t" style="left:31.0px;top:281.8px;font-size:8.6px;color:#222;font-weight:bold;">Photo open (overlay)</div>
<svg class="abs" style="left:31.0px;top:306.7px" width="12" height="12" viewBox="0 0 12 12"><g fill="none" stroke="#c8a6fb" stroke-width="0.85"><path d="M6 1.7 L10.3 6 L6 10.3 L1.7 6 Z"/></g></svg>
<div class="t" style="left:49.5px;top:306.4px;font-size:9px;color:#8a38f5;">Component</div>
<svg class="abs" style="left:49.0px;top:331.3px" width="12" height="12" viewBox="0 0 12 12"><g fill="none" stroke="#c8a6fb" stroke-width="0.85"><rect x="1.4" y="1.6" width="9.2" height="8.8" rx="0.8"/><circle cx="7.9" cy="4.2" r="1.1"/><path d="M1.6 8.6 L5 5.4 L9.6 10.2"/></g></svg>
<div class="t" style="left:67.5px;top:331.0px;font-size:9px;color:#8a38f5;">Ellipse</div>
<svg class="abs" style="left:49.0px;top:355.8px" width="12" height="12" viewBox="0 0 12 12"><g fill="none" stroke="#c8a6fb" stroke-width="0.85"><path d="M2.2 3.6 V2 H9.8 V3.6 M6 2 V10 M4.6 10 H7.4"/></g></svg>
<div class="t" style="left:67.5px;top:355.5px;font-size:9px;color:#8a38f5;">@ridzjcob</div>
<svg class="abs" style="left:49.0px;top:380.4px" width="12" height="12" viewBox="0 0 12 12"><g fill="none" stroke="#c8a6fb" stroke-width="0.85"><path d="M2.2 3.6 V2 H9.8 V3.6 M6 2 V10 M4.6 10 H7.4"/></g></svg>
<div class="t" style="left:67.5px;top:380.1px;font-size:9px;color:#8a38f5;">Ridhwan Nordin</div>
<svg class="abs" style="left:31.0px;top:405.0px" width="12" height="12" viewBox="0 0 12 12"><g fill="none" stroke="#b3b3b3" stroke-width="0.85"><path d="M3.9 1.6 V10.4 M8.1 1.6 V10.4 M1.6 3.9 H10.4 M1.6 8.1 H10.4"/></g></svg>
<div class="t" style="left:49.5px;top:404.7px;font-size:9px;color:#333;">32 / x</div>
<svg class="abs" style="left:31.0px;top:429.6px" width="12" height="12" viewBox="0 0 12 12"><g fill="none" stroke="#b3b3b3" stroke-width="0.85"><rect x="2.2" y="3.3" width="7.6" height="5.4"/></g></svg>
<div class="t" style="left:49.5px;top:429.3px;font-size:9px;color:#333;">Rectangle 2</div>
<svg class="abs" style="left:31.0px;top:454.2px" width="12" height="12" viewBox="0 0 12 12"><g fill="none" stroke="#b3b3b3" stroke-width="0.85"><rect x="1.4" y="1.6" width="9.2" height="8.8" rx="0.8"/><circle cx="7.9" cy="4.2" r="1.1"/><path d="M1.6 8.6 L5 5.4 L9.6 10.2"/></g></svg>
<div class="t" style="left:49.5px;top:453.9px;font-size:9px;color:#333;">Rectangle</div>
<svg class="abs" style="left:12.5px;top:478.7px" width="12" height="12" viewBox="0 0 12 12"><g fill="none" stroke="#333" stroke-width="0.85"><path d="M3.9 1.6 V10.4 M8.1 1.6 V10.4 M1.6 3.9 H10.4 M1.6 8.1 H10.4"/></g></svg>
<div class="t" style="left:31.0px;top:478.4px;font-size:8.6px;color:#222;font-weight:bold;">Search results (preserve scroll po...</div>
<svg class="abs" style="left:31.0px;top:521.6px" width="12" height="12" viewBox="0 0 12 12"><g fill="none" stroke="#c8a6fb" stroke-width="0.85"><path d="M6 1.7 L10.3 6 L6 10.3 L1.7 6 Z"/></g></svg>
<div class="t" style="left:49.5px;top:521.3px;font-size:9px;color:#8a38f5;">Tab Bar</div>
<svg class="abs" style="left:31.0px;top:546.2px" width="12" height="12" viewBox="0 0 12 12"><g fill="none" stroke="#c8a6fb" stroke-width="0.85"><path d="M6 1.7 L10.3 6 L6 10.3 L1.7 6 Z"/></g></svg>
<div class="t" style="left:49.5px;top:545.9px;font-size:9px;color:#8a38f5;">Status Bar</div>
<div class="t" style="left:31.0px;top:499.9px;font-size:7px;color:#8a8a8a;letter-spacing:0.65px;">FIXED</div>
<div class="abs" style="left:27px;top:175px;width:89px;height:27.5px;border:2px solid #f8001a"></div>
</div>
<div id="right">
<div class="t" style="left:12.2px;top:9.5px;font-size:9px;color:#808080;letter-spacing:0.031px;">Design</div>
<div class="t" style="left:52.5px;top:9.5px;font-size:8.7px;color:#222;font-weight:bold;letter-spacing:-0.027px;">Prototype</div>
<div class="t" style="left:104.4px;top:9.5px;font-size:9px;color:#808080;letter-spacing:0.196px;">Inspect</div>
<div class="abs" style="left:0;top:30.5px;width:184px;height:1px;background:#e8e8e8"></div>
<div class="t" style="left:12.2px;top:44.0px;font-size:8.7px;color:#222;font-weight:bold;letter-spacing:-0.036px;">Device</div>
<div class="t" style="left:12.2px;top:68.5px;font-size:9px;color:#333;letter-spacing:-0.129px;">iPhone X</div>
<svg class="abs" style="left:49.5px;top:70.5px" width="10" height="8" viewBox="0 0 10 8"><path d="M2.8 2.6 l2.2 2.2 l2.2 -2.2" fill="none" stroke="#aaa" stroke-width="0.85"/></svg>
<div class="abs" style="left:138px;top:65.19999999999999px;width:18.8px;height:18.6px;border-radius:2px;background:#e5e5e5"></div>
<div class="abs" style="left:144px;top:69px;width:7px;height:11px;border:1px solid #333;border-radius:1px"></div>
<div class="abs" style="left:160.20000000000005px;top:71px;width:11px;height:7px;border:1px solid #333;border-radius:1px"></div>
<div class="t" style="left:12.2px;top:93.0px;font-size:9px;color:#808080;">Model</div>
<div class="t" style="left:12.2px;top:111.5px;font-size:9px;color:#333;letter-spacing:-0.123px;">Space Grey</div>
<svg class="abs" style="left:60px;top:113.5px" width="10" height="8" viewBox="0 0 10 8"><path d="M2.8 2.6 l2.2 2.2 l2.2 -2.2" fill="none" stroke="#aaa" stroke-width="0.85"/></svg>
<div class="t" style="left:12.2px;top:135.6px;font-size:9px;color:#808080;">Preview</div>
<div class="abs" style="left:9px;top:152.8px;width:167px;height:100px;background:#000;border-radius:2px"></div>
<div class="abs" style="left:71.29999999999995px;top:160.3px;width:42px;height:85px;border-radius:6.5px;background:#050505;border:1px solid #3c3c3c"></div>
<div class="abs" style="left:73.29999999999995px;top:162.5px;width:38px;height:80.6px;border-radius:4.5px;background:#1c2028"></div>
<div class="abs" style="left:82.20000000000005px;top:162px;width:20.2px;height:4.2px;border-radius:0 0 3px 3px;background:#050505"></div>
<div class="abs" style="left:0;top:263.8px;width:184px;height:1px;background:#e8e8e8"></div>
<div class="t" style="left:12.4px;top:277.0px;font-size:8.7px;color:#222;font-weight:bold;letter-spacing:-0.199px;">Background</div>
<div class="abs" style="left:12.399999999999977px;top:301.8px;width:11.6px;height:11.4px;background:#000"></div>
<div class="t" style="left:30.8px;top:301.5px;font-size:9px;color:#333;letter-spacing:0.192px;">000000</div>
<div class="abs" style="left:0;top:325.0px;width:184px;height:1px;background:#e8e8e8"></div>
<div class="t" style="left:12.4px;top:339.0px;font-size:8.7px;color:#222;font-weight:bold;letter-spacing:-0.205px;">Flows</div>
<div class="t" style="left:12.4px;top:363.4px;font-size:9px;color:#333;">Flow 1</div>
<div class="abs" style="left:0;top:388.3px;width:184px;height:1px;background:#e8e8e8"></div>
<div class="t" style="left:12.4px;top:400.8px;font-size:8.7px;color:#222;font-weight:bold;letter-spacing:-0.143px;">Removing a connection</div>
<svg class="abs" style="left:159.6px;top:400.8px" width="12" height="12" viewBox="0 0 12 12"><path d="M2 2 L10 10 M10 2 L2 10" fill="none" stroke="#333" stroke-width="0.85"/></svg>
<svg class="abs" style="left:11px;top:424px" width="18" height="16" viewBox="0 0 18 16"><g fill="none" stroke="#333" stroke-width="0.85"><path d="M1.5 2.2 H6 V13 H1.5"/><circle cx="6" cy="7.8" r="1.4" fill="#fff"/><path d="M8.6 5.2 L13.6 10.2 M13.6 5.2 L8.6 10.2"/></g></svg>
<div class="t" style="left:37.0px;top:425.8px;font-size:9px;color:#333;letter-spacing:0.032px;">To delete a connection, click</div>
<div class="t" style="left:37.0px;top:438.2px;font-size:9px;color:#333;">and drag on either end.</div>
<div class="t" style="left:12.4px;top:469.0px;font-size:8.7px;color:#222;font-weight:bold;letter-spacing:-0.134px;">Running your prototype</div>
<svg class="abs" style="left:159.6px;top:469.0px" width="12" height="12" viewBox="0 0 12 12"><path d="M2 2 L10 10 M10 2 L2 10" fill="none" stroke="#333" stroke-width="0.85"/></svg>
<svg class="abs" style="left:13px;top:492px" width="14" height="14" viewBox="0 0 14 14"><path d="M3.6 3.2 L10.2 7.2 L3.6 11.2 Z" fill="none" stroke="#333" stroke-width="0.85" stroke-linejoin="round"/></svg>
<div class="t" style="left:37.0px;top:493.2px;font-size:9px;color:#333;">Use the play button in the</div>
<div class="t" style="left:37.0px;top:505.6px;font-size:9px;color:#333;">toolbar to play your prototype.</div>
<div class="t" style="left:37.0px;top:517.9px;font-size:9px;color:#333;">If there are no connections, the</div>
<div class="t" style="left:37.0px;top:530.2px;font-size:9px;color:#333;">play button can be used to play</div>
<div class="t" style="left:37.0px;top:542.6px;font-size:9px;color:#333;letter-spacing:0.028px;">a presentation of your frames.</div>
<div class="abs" style="left:137.79999999999995px;top:512.6px;width:28px;height:28px;border-radius:15px;background:#222;box-shadow:0 1px 3px rgba(0,0,0,.3)"></div>
<div class="t" style="left:148.4px;top:521.4px;font-size:14px;color:#e6e6e6;line-height:12px;">?</div>
</div>
</div>
</body></html>
